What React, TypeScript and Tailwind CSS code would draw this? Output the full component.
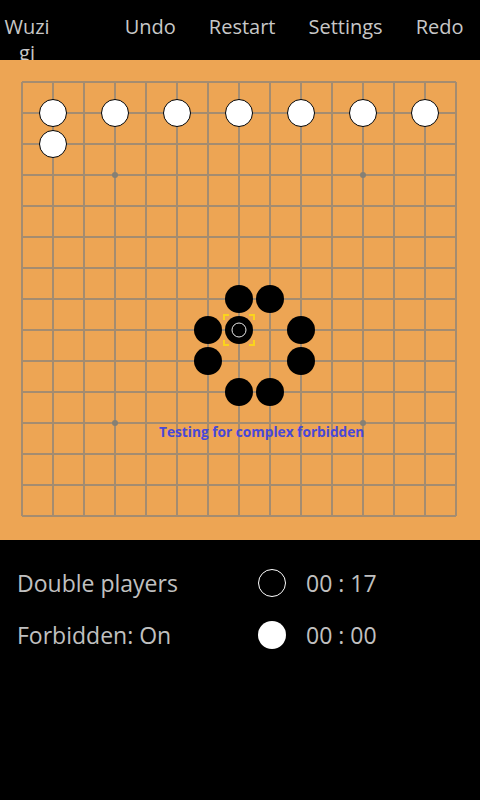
import React from 'react';

const N = 15;
const START = 22;
const CELL = 31;

const pos = (i: number) => START + i * CELL;

const WHITE: [number, number][] = [
  [1, 1], [3, 1], [5, 1], [7, 1], [9, 1], [11, 1], [13, 1],
  [1, 2],
];

const BLACK: [number, number][] = [
  [7, 7], [8, 7],
  [6, 8], [7, 8], [9, 8],
  [6, 9], [9, 9],
  [7, 10], [8, 10],
];

const STARS: [number, number][] = [
  [3, 3], [11, 3], [3, 11], [11, 11],
];

const Board: React.FC = () => {
  const lx = pos(7);
  const ly = pos(8);
  const h = 15;
  const c = 5;
  const corners = [
    [lx - h, ly - h + c, lx - h, ly - h, lx - h + c, ly - h],
    [lx + h - c, ly - h, lx + h, ly - h, lx + h, ly - h + c],
    [lx - h, ly + h - c, lx - h, ly + h, lx - h + c, ly + h],
    [lx + h - c, ly + h, lx + h, ly + h, lx + h, ly + h - c],
  ];
  return (
    <svg width={480} height={480} viewBox="0 0 480 480" className="block">
      <rect x={0} y={0} width={480} height={480} fill="#eda554" />
      {Array.from({ length: N }).map((_, i) => (
        <g key={i}>
          <line x1={pos(i)} y1={START} x2={pos(i)} y2={pos(N - 1)} stroke="#a48c70" strokeWidth={2} />
          <line x1={START} y1={pos(i)} x2={pos(N - 1)} y2={pos(i)} stroke="#a48c70" strokeWidth={2} />
        </g>
      ))}
      {STARS.map(([x, y], i) => (
        <circle key={i} cx={pos(x)} cy={pos(y)} r={3} fill="#858075" />
      ))}
      {WHITE.map(([x, y], i) => (
        <circle key={i} cx={pos(x)} cy={pos(y)} r={13.5} fill="#ffffff" stroke="#000000" strokeWidth={1} />
      ))}
      {BLACK.map(([x, y], i) => (
        <circle key={i} cx={pos(x)} cy={pos(y)} r={14} fill="#000000" />
      ))}
      <circle cx={lx} cy={ly} r={7} fill="none" stroke="#e8e8e8" strokeWidth={1} />
      {corners.map((p, i) => (
        <polyline
          key={i}
          points={`${p[0]},${p[1]} ${p[2]},${p[3]} ${p[4]},${p[5]}`}
          fill="none"
          stroke="#fad41c"
          strokeWidth={2}
        />
      ))}
    </svg>
  );
};

const App: React.FC = () => {
  const font = { fontFamily: '"Open Sans", "DejaVu Sans", sans-serif' };
  return (
    <div className="w-[480px] h-[800px] bg-black overflow-hidden" style={font}>
      <header className="h-[60px] flex items-start overflow-hidden text-[#c8c8c8] text-[20px] leading-[26px]">
        <div className="w-[54px] pt-[14px] text-center break-all">Wuzigi</div>
        <nav className="ml-auto flex pt-[14px]">
          {['Undo', 'Restart', 'Settings', 'Redo'].map((t) => (
            <button key={t} className="px-[16.5px]">{t}</button>
          ))}
        </nav>
      </header>

      <div className="relative w-[480px] h-[480px]">
        <Board />
        <div className="absolute left-[159px] top-[363px] text-[13.7px] font-bold text-[#4848d8] leading-[18px]">
          Testing for complex forbidden
        </div>
      </div>

      <div className="pt-[17px] text-[#c0c0c0] text-[23px]">
        <div className="h-[52px] flex items-center pl-[17px]">
          <span className="w-[241px]">Double players</span>
          <span className="w-[28px] h-[28px] rounded-full border border-white" />
          <span className="ml-[20px]">00 : 17</span>
        </div>
        <div className="h-[52px] flex items-center pl-[17px]">
          <span className="w-[241px]">Forbidden: On</span>
          <span className="w-[28px] h-[28px] rounded-full bg-white" />
          <span className="ml-[20px]">00 : 00</span>
        </div>
      </div>
    </div>
  );
};

export default App;
